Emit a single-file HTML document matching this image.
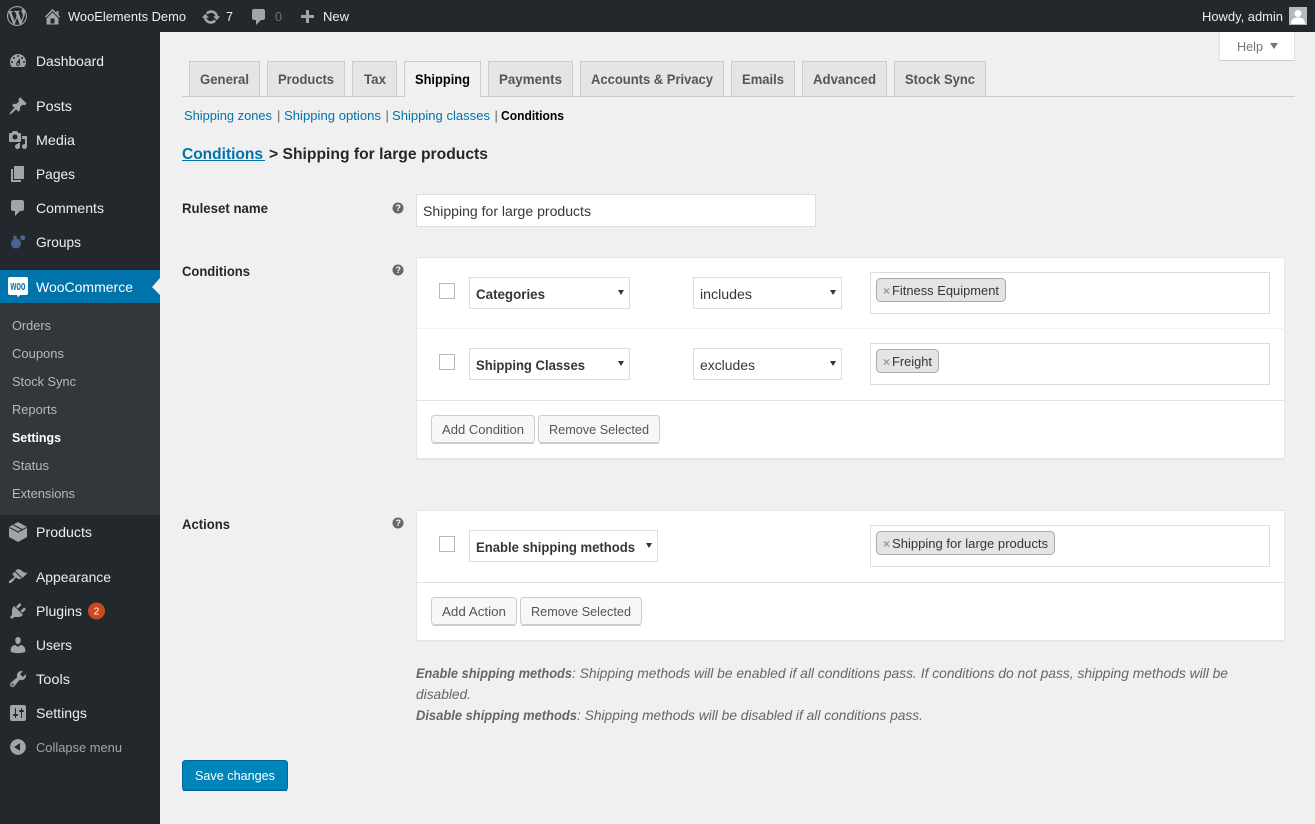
<!DOCTYPE html>
<html><head><meta charset="utf-8"><title>Shipping for large products</title>
<style>
html,body{margin:0;padding:0;width:1315px;height:824px;overflow:hidden;background:#f0f0f0}
svg{display:block}
text{font-family:"Liberation Sans",sans-serif;font-size:14px;white-space:pre}
.m{fill:#eee}
.s{font-size:13px;fill:#b4b9be}
.i{fill:#a0a5aa}
.tab{font-weight:bold;fill:#555}
.l{font-size:13px;fill:#0073aa}
.lab{font-weight:bold;fill:#23282d}
.sel{fill:#32373c}
.b{font-weight:bold}
.tg{font-size:13px;fill:#32373c}
.bt{font-size:13px;fill:#555}
.d{font-style:italic;fill:#666}
</style></head><body>
<svg width="1315" height="824" viewBox="0 0 1315 824" xmlns="http://www.w3.org/2000/svg">
<defs>
<path id="cm" d="M5 2h9c1.1 0 2 .9 2 2v7c0 1.1-.9 2-2 2h-2l-5 5v-5H5c-1.1 0-2-.9-2-2V4c0-1.1.9-2 2-2z"/>
</defs>
<rect width="1315" height="824" fill="#f0f0f0"/>
<rect x="763" y="762" width="254" height="62" fill="#f1f1f1"/>

<!-- sidebar -->
<rect x="0" y="0" width="160" height="824" fill="#23282d"/>
<rect x="0" y="303" width="160" height="212" fill="#32373c"/>
<rect x="0" y="270" width="160" height="33" fill="#0073aa"/>
<polygon points="160,278 152,287 160,295" fill="#f0f0f0"/>
<!-- admin bar -->
<rect x="0" y="0" width="1315" height="32" fill="#23282d"/>

<g class="i">
<path transform="translate(7,6)" d="M20 10c0-5.51-4.49-10-10-10C4.48 0 0 4.49 0 10c0 5.52 4.48 10 10 10 5.51 0 10-4.48 10-10zM7.78 15.37L4.37 6.22c.55-.02 1.17-.08 1.17-.08.5-.06.44-1.13-.06-1.11 0 0-1.45.11-2.37.11-.18 0-.37 0-.58-.01C4.12 2.69 6.87 1.11 10 1.11c2.33 0 4.45.87 6.05 2.34-.68-.11-1.65.39-1.65 1.58 0 .74.45 1.36.9 2.1.35.61.55 1.36.55 2.46 0 1.49-1.4 5-1.4 5l-3.03-8.37c.54-.02.82-.17.82-.17.5-.05.44-1.25-.06-1.22 0 0-1.44.12-2.38.12-.87 0-2.33-.12-2.33-.12-.5-.03-.56 1.2-.06 1.22l.92.08 1.26 3.41zM17.41 10c.24-.64.74-1.87.43-4.25.7 1.29 1.05 2.71 1.05 4.25 0 3.29-1.73 6.24-4.4 7.78.97-2.59 1.94-5.2 2.92-7.78zM6.1 18.09C3.12 16.65 1.11 13.53 1.11 10c0-1.3.23-2.48.72-3.59C3.25 10.3 4.67 14.2 6.1 18.09zm4.03-6.63l2.58 6.98c-.86.29-1.76.45-2.71.45-.79 0-1.57-.11-2.29-.33.81-2.38 1.62-4.74 2.42-7.1z"/>
<path transform="translate(42.5,6.5)" d="M16 8.5l1.53 1.53-1.06 1.06L10 4.62l-6.47 6.47-1.06-1.06L10 2.5l4 4v-2h2v4zm-6-2.46l6 5.99V18H4v-5.97zM12 17v-5H8v5h4z"/>
<path transform="translate(201,7)" d="M10.2 3.28c3.53 0 6.43 2.61 6.92 6h2.08l-3.5 4-3.5-4h2.32c-.45-1.97-2.21-3.45-4.32-3.45-1.45 0-2.73.71-3.54 1.78L4.95 5.66C6.23 4.2 8.11 3.28 10.2 3.28zm-.4 13.44c-3.52 0-6.43-2.61-6.92-6H.8l3.5-4c1.17 1.33 2.33 2.67 3.5 4H5.48c.45 1.97 2.21 3.45 4.32 3.45 1.45 0 2.73-.71 3.54-1.78l1.71 1.95c-1.28 1.46-3.15 2.38-5.25 2.38z"/>
<use href="#cm" transform="translate(249,7)"/>
<path transform="translate(297,8)" d="M17 7v3h-5v5H9v-5H4V7h5V2h3v5h5z"/>

<path transform="translate(8,51)" d="M3.76 16h12.48c1.1-1.37 1.76-3.11 1.76-5 0-4.42-3.58-8-8-8s-8 3.58-8 8c0 1.89.66 3.63 1.76 5zM10 4c.55 0 1 .45 1 1s-.45 1-1 1-1-.45-1-1 .45-1 1-1zM6 6c.55 0 1 .45 1 1s-.45 1-1 1-1-.45-1-1 .45-1 1-1zm8 0c.55 0 1 .45 1 1s-.45 1-1 1-1-.45-1-1 .45-1 1-1zm-5.37 5.55L12 7v6c0 1.1-.9 2-2 2s-2-.9-2-2c0-.57.24-1.08.63-1.45zM4 10c.55 0 1 .45 1 1s-.45 1-1 1-1-.45-1-1 .45-1 1-1zm12 0c.55 0 1 .45 1 1s-.45 1-1 1-1-.45-1-1 .45-1 1-1zm-5 3c0-.55-.45-1-1-1s-1 .45-1 1 .45 1 1 1 1-.45 1-1z" fill-rule="evenodd"/>
<path transform="translate(8,96)" d="M10.44 3.02l1.82-1.82 6.36 6.35-1.83 1.82c-1.05-.68-2.48-.57-3.41.36l-.75.75c-.92.93-1.04 2.35-.35 3.41l-1.83 1.82-2.41-2.41-2.8 2.79c-.42.42-3.38 2.71-3.8 2.29s1.86-3.39 2.28-3.81l2.79-2.79L4.1 9.36l1.83-1.82c1.05.69 2.48.57 3.4-.36l.75-.75c.93-.92 1.05-2.35.36-3.41z"/>
<path transform="translate(8,130)" d="M13 11V4c0-.55-.45-1-1-1h-1.67L9 1H5L3.67 3H2c-.55 0-1 .45-1 1v7c0 .55.45 1 1 1h10c.55 0 1-.45 1-1zM7 4.5c1.38 0 2.5 1.12 2.5 2.5S8.38 9.5 7 9.5 4.5 8.38 4.5 7 5.62 4.5 7 4.5zM14 6h5v10.5c0 1.38-1.12 2.5-2.5 2.5S14 17.88 14 16.5s1.12-2.5 2.5-2.5c.17 0 .34.02.5.05V9h-3V6zm-4 8.05V13h2v3.5c0 1.38-1.12 2.5-2.5 2.5S7 17.88 7 16.5 8.12 14 9.5 14c.17 0 .34.02.5.05z"/>
<path transform="translate(8,164)" d="M6 15V2h10v13H6zm-1 1h8v2H3V5h2v11z"/>
<use href="#cm" transform="translate(8,198)"/>
<polygon points="18,522 27,527 27,537 18,542 9,537 9,527"/>
<path transform="translate(8,567)" d="M14.48 11.06L7.41 3.99l1.5-1.5c.5-.56 2.3-.47 3.51.32 1.21.8 1.43 1.28 2.91 2.1 1.18.64 2.45 1.26 4.45.85zm-.71.71L6.7 4.7 4.93 6.47c-.39.39-.39 1.02 0 1.41l1.06 1.06c.39.39.39 1.03 0 1.42-.6.6-1.43 1.11-2.21 1.69-.35.26-.7.53-1.01.84C1.43 13.23.27 15.14 1 15.87c.74.73 2.65-.43 3.99-1.77.31-.31.58-.66.84-1.01.58-.78 1.09-1.61 1.69-2.21.39-.39 1.03-.39 1.42 0l1.06 1.06c.39.39 1.02.39 1.41 0z"/>
<path transform="translate(8,601)" d="M13.11 4.36L9.87 7.6 8 5.73l3.24-3.24c.35-.34 1.05-.2 1.56.32.52.51.66 1.21.31 1.55zm-8 1.77l.91-1.12 9.01 9.01-1.19.84c-.71.71-2.63 1.16-3.82 1.16H6.14L4.9 17.26c-.59.59-1.54.59-2.12 0-.59-.58-.59-1.53 0-2.12l1.24-1.24v-3.88c0-1.13.4-3.19 1.09-3.89zm7.26 3.97l3.24-3.24c.34-.35 1.04-.21 1.55.31.52.51.66 1.21.31 1.55l-3.24 3.25z"/>
<path transform="translate(8,635)" d="M10 9.25c-2.27 0-2.73-3.44-2.73-3.44C7 4.02 7.82 2 9.97 2c2.16 0 2.98 2.02 2.71 3.81 0 0-.41 3.44-2.68 3.44zm0 2.57L12.72 10c2.39 0 4.52 2.33 4.52 4.53v2.49s-3.65 1.13-7.24 1.13c-3.65 0-7.24-1.13-7.24-1.13v-2.49c0-2.25 1.94-4.48 4.47-4.48z"/>
<path transform="translate(8,669)" d="M16.68 9.77c-1.34 1.34-3.3 1.67-4.95.99l-5.41 6.52c-.99.99-2.59.99-3.58 0s-.99-2.59 0-3.57l6.52-5.42c-.68-1.65-.35-3.61.99-4.95 1.28-1.28 3.12-1.62 4.72-1.06l-2.89 2.89 2.82 2.82 2.86-2.87c.53 1.58.18 3.39-1.08 4.65zM3.81 16.21c.4.39 1.04.39 1.43 0 .4-.4.4-1.04 0-1.43-.39-.4-1.03-.4-1.43 0-.39.39-.39 1.03 0 1.43z"/>
<path transform="translate(8,703)" d="M18 16V4c0-1.1-.9-2-2-2H4c-1.1 0-2 .9-2 2v12c0 1.1.9 2 2 2h12c1.1 0 2-.9 2-2zM8 11h1c.55 0 1 .45 1 1s-.45 1-1 1H8v1.5c0 .28-.22.5-.5.5s-.5-.22-.5-.5V13H6c-.55 0-1-.45-1-1s.45-1 1-1h1V5.5c0-.28.22-.5.5-.5s.5.22.5.5V11zm5-2h-1c-.55 0-1-.45-1-1s.45-1 1-1h1V5.5c0-.28.22-.5.5-.5s.5.22.5.5V7h1c.55 0 1 .45 1 1s-.45 1-1 1h-1v5.5c0 .28-.22.5-.5.5s-.5-.22-.5-.5V9z" fill-rule="evenodd"/>
<path transform="translate(8,737)" d="M10 2.16c4.33 0 7.84 3.51 7.84 7.84s-3.51 7.84-7.84 7.84S2.16 14.33 2.16 10 5.71 2.16 10 2.16zm2 11.72V6.12L6.18 9.97z"/>
</g>
<!-- products box detail -->
<path d="M9.500 527.500L18 532L26.500 527.500M13.500 525L22 529.500" fill="none" stroke="#23282d" stroke-width="1"/>
<!-- groups -->
<g fill="#4a6494"><circle cx="16" cy="243.500" r="5"/><circle cx="22.700" cy="237.700" r="2.500"/><circle cx="15" cy="237.300" r="1.700"/></g>
<!-- woo -->
<path d="M10 277h16a2 2 0 0 1 2 2v14a2 2 0 0 1-2 2h-6l-2 2.500-1-2.500h-7a2 2 0 0 1-2-2v-14a2 2 0 0 1 2-2z" fill="#fff"/>
<text x="10.500" y="290" font-weight="bold" style="font-size:13px" fill="#0073aa" textLength="15" lengthAdjust="spacingAndGlyphs">woo</text>

<!-- admin bar text -->
<text class="m" style="font-size:13px" x="68" y="21" textLength="118" lengthAdjust="spacingAndGlyphs">WooElements Demo</text>
<text class="m" style="font-size:13px" x="226" y="21" textLength="7" lengthAdjust="spacingAndGlyphs">7</text>
<text style="font-size:13px" fill="#6f7478" x="275" y="21" textLength="7" lengthAdjust="spacingAndGlyphs">0</text>
<text class="m" style="font-size:13px" x="323" y="21" textLength="26" lengthAdjust="spacingAndGlyphs">New</text>
<text class="m" style="font-size:13px" x="1202" y="21" textLength="81" lengthAdjust="spacingAndGlyphs">Howdy, admin</text>
<rect x="1289" y="7" width="18" height="18" fill="#b9b9b9"/>
<circle cx="1298" cy="13.500" r="3.500" fill="#fff"/><path d="M1291 24c0-5 3-6.500 7-6.500s7 1.500 7 6.500z" fill="#fff"/>

<!-- side menu text -->
<text class="m" x="36" y="66" textLength="68" lengthAdjust="spacingAndGlyphs">Dashboard</text>
<text class="m" x="36" y="111" textLength="36" lengthAdjust="spacingAndGlyphs">Posts</text>
<text class="m" x="36" y="145" textLength="39" lengthAdjust="spacingAndGlyphs">Media</text>
<text class="m" x="36" y="179" textLength="39" lengthAdjust="spacingAndGlyphs">Pages</text>
<text class="m" x="36" y="213" textLength="68" lengthAdjust="spacingAndGlyphs">Comments</text>
<text class="m" x="36" y="247" textLength="45" lengthAdjust="spacingAndGlyphs">Groups</text>
<text fill="#fff" x="36" y="292" textLength="97" lengthAdjust="spacingAndGlyphs">WooCommerce</text>
<text class="s" x="12" y="330" textLength="39" lengthAdjust="spacingAndGlyphs">Orders</text>
<text class="s" x="12" y="358" textLength="52" lengthAdjust="spacingAndGlyphs">Coupons</text>
<text class="s" x="12" y="386" textLength="64" lengthAdjust="spacingAndGlyphs">Stock Sync</text>
<text class="s" x="12" y="414" textLength="45" lengthAdjust="spacingAndGlyphs">Reports</text>
<text class="s" style="fill:#fff;font-weight:bold" x="12" y="442" textLength="49" lengthAdjust="spacingAndGlyphs">Settings</text>
<text class="s" x="12" y="470" textLength="37" lengthAdjust="spacingAndGlyphs">Status</text>
<text class="s" x="12" y="498" textLength="63" lengthAdjust="spacingAndGlyphs">Extensions</text>
<text class="m" x="36" y="537" textLength="56" lengthAdjust="spacingAndGlyphs">Products</text>
<text class="m" x="36" y="582" textLength="75" lengthAdjust="spacingAndGlyphs">Appearance</text>
<text class="m" x="36" y="616" textLength="46" lengthAdjust="spacingAndGlyphs">Plugins</text>
<circle cx="96.500" cy="611" r="8.500" fill="#ca4a1f"/>
<text fill="#fff" style="font-size:10px" x="93.800" y="614.500" textLength="5.500" lengthAdjust="spacingAndGlyphs">2</text>
<text class="m" x="36" y="650" textLength="36" lengthAdjust="spacingAndGlyphs">Users</text>
<text class="m" x="36" y="684" textLength="34" lengthAdjust="spacingAndGlyphs">Tools</text>
<text class="m" x="36" y="718" textLength="51" lengthAdjust="spacingAndGlyphs">Settings</text>
<text style="font-size:13px" fill="#a0a5aa" x="36" y="752" textLength="86" lengthAdjust="spacingAndGlyphs">Collapse menu</text>

<!-- help tab -->
<rect x="1220" y="32" width="74" height="28" fill="#fff"/>
<rect x="1219" y="32" width="1" height="28" fill="#e3e3e3"/><rect x="1294" y="32" width="1" height="28" fill="#e3e3e3"/>
<rect x="1219" y="60" width="76" height="1" fill="#cfcfcf"/>
<text style="font-size:13px" fill="#72777c" x="1237" y="51" textLength="26" lengthAdjust="spacingAndGlyphs">Help</text>
<polygon points="1270,43 1278,43 1274,49" fill="#72777c"/>

<!-- tabs -->
<rect x="182" y="96" width="1113" height="1" fill="#ccc"/>
<g fill="#e5e5e5" stroke="#ccc">
<rect x="189.500" y="61.500" width="70" height="35"/>
<rect x="267.500" y="61.500" width="77" height="35"/>
<rect x="352.500" y="61.500" width="44" height="35"/>
<rect x="488.500" y="61.500" width="84" height="35"/>
<rect x="580.500" y="61.500" width="143" height="35"/>
<rect x="731.500" y="61.500" width="63" height="35"/>
<rect x="802.500" y="61.500" width="84" height="35"/>
<rect x="894.500" y="61.500" width="91" height="35"/>
</g>
<path d="M404.500 97V61.500H480.500V97" fill="#f1f1f1" stroke="#ccc"/>
<rect x="405" y="96" width="75" height="1" fill="#f1f1f1"/>
<text class="tab" x="200" y="84" textLength="49" lengthAdjust="spacingAndGlyphs">General</text>
<text class="tab" x="278" y="84" textLength="56" lengthAdjust="spacingAndGlyphs">Products</text>
<text class="tab" x="364" y="84" textLength="22" lengthAdjust="spacingAndGlyphs">Tax</text>
<text class="tab" style="fill:#000" x="415" y="84" textLength="55" lengthAdjust="spacingAndGlyphs">Shipping</text>
<text class="tab" x="499" y="84" textLength="63" lengthAdjust="spacingAndGlyphs">Payments</text>
<text class="tab" x="591" y="84" textLength="122" lengthAdjust="spacingAndGlyphs">Accounts &amp; Privacy</text>
<text class="tab" x="742" y="84" textLength="42" lengthAdjust="spacingAndGlyphs">Emails</text>
<text class="tab" x="813" y="84" textLength="63" lengthAdjust="spacingAndGlyphs">Advanced</text>
<text class="tab" x="905" y="84" textLength="70" lengthAdjust="spacingAndGlyphs">Stock Sync</text>

<!-- sublinks -->
<text class="l" x="184" y="120" textLength="88" lengthAdjust="spacingAndGlyphs">Shipping zones</text>
<text style="font-size:13px" fill="#666" x="277" y="120">|</text>
<text class="l" x="284" y="120" textLength="97" lengthAdjust="spacingAndGlyphs">Shipping options</text>
<text style="font-size:13px" fill="#666" x="385.500" y="120">|</text>
<text class="l" x="392" y="120" textLength="98" lengthAdjust="spacingAndGlyphs">Shipping classes</text>
<text style="font-size:13px" fill="#666" x="494.500" y="120">|</text>
<text style="font-size:13px;font-weight:bold" fill="#000" x="501" y="120" textLength="63" lengthAdjust="spacingAndGlyphs">Conditions</text>

<!-- heading -->
<text style="font-size:16px;font-weight:bold" fill="#0073aa" x="182" y="159" textLength="81" lengthAdjust="spacingAndGlyphs">Conditions</text>
<rect x="182" y="160" width="83" height="1" fill="#0073aa"/>
<text style="font-size:16px;font-weight:bold" fill="#23282d" x="269" y="159" textLength="219" lengthAdjust="spacingAndGlyphs">&gt; Shipping for large products</text>

<!-- labels -->
<text class="lab" x="182" y="213" textLength="86" lengthAdjust="spacingAndGlyphs">Ruleset name</text>
<text class="lab" x="182" y="276" textLength="68" lengthAdjust="spacingAndGlyphs">Conditions</text>
<text class="lab" x="182" y="529" textLength="48" lengthAdjust="spacingAndGlyphs">Actions</text>
<circle cx="398" cy="208" r="5.500" fill="#666"/><circle cx="398" cy="270" r="5.500" fill="#666"/><circle cx="398" cy="523" r="5.500" fill="#666"/>
<text fill="#fff" style="font-size:9px;font-weight:bold" x="395.500" y="211.200">?</text>
<text fill="#fff" style="font-size:9px;font-weight:bold" x="395.500" y="273.200">?</text>
<text fill="#fff" style="font-size:9px;font-weight:bold" x="395.500" y="526.200">?</text>

<!-- ruleset input -->
<rect x="416.500" y="194.500" width="399" height="32" fill="#fff" stroke="#ddd"/>
<text class="sel" x="423" y="216" textLength="168" lengthAdjust="spacingAndGlyphs">Shipping for large products</text>

<!-- conditions box -->
<rect x="416.500" y="257.500" width="868" height="201" fill="#fff" stroke="#e5e5e5"/>
<rect x="416" y="459" width="869" height="1" fill="#e6e6e6"/>
<rect x="417" y="328" width="867" height="1" fill="#f3f3f3"/>
<rect x="417" y="400" width="867" height="1" fill="#e1e1e1"/>
<!-- actions box -->
<rect x="416.500" y="510.500" width="868" height="130" fill="#fff" stroke="#e5e5e5"/>
<rect x="416" y="641" width="869" height="1" fill="#e6e6e6"/>
<rect x="417" y="582" width="867" height="1" fill="#e1e1e1"/>

<g fill="#fff" stroke="#b4b9be">
<rect x="439.500" y="283.500" width="15" height="15"/>
<rect x="439.500" y="354.500" width="15" height="15"/>
<rect x="439.500" y="536.500" width="15" height="15"/>
</g>
<g fill="#fff" stroke="#ddd">
<rect x="469.500" y="277.500" width="160" height="31"/>
<rect x="693.500" y="277.500" width="148" height="31"/>
<rect x="870.500" y="272.500" width="399" height="41"/>
<rect x="469.500" y="348.500" width="160" height="31"/>
<rect x="693.500" y="348.500" width="148" height="31"/>
<rect x="870.500" y="343.500" width="399" height="41"/>
<rect x="469.500" y="530.500" width="188" height="31"/>
<rect x="870.500" y="525.500" width="399" height="41"/>
</g>
<g fill="#32373c">
<polygon points="618,290 624,290 621,295"/>
<polygon points="830,290 836,290 833,295"/>
<polygon points="618,361 624,361 621,366"/>
<polygon points="830,361 836,361 833,366"/>
<polygon points="646,543 652,543 649,548"/>
</g>
<text class="sel b" x="476" y="299" textLength="69" lengthAdjust="spacingAndGlyphs">Categories</text>
<text class="sel" x="700" y="299" textLength="52" lengthAdjust="spacingAndGlyphs">includes</text>
<text class="sel b" x="476" y="370" textLength="109" lengthAdjust="spacingAndGlyphs">Shipping Classes</text>
<text class="sel" x="700" y="370" textLength="55" lengthAdjust="spacingAndGlyphs">excludes</text>
<text class="sel b" x="476" y="552" textLength="159" lengthAdjust="spacingAndGlyphs">Enable shipping methods</text>
<g fill="#e4e4e4" stroke="#aaa">
<rect x="876.500" y="278.500" width="129" height="23" rx="4"/>
<rect x="876.500" y="349.500" width="62" height="23" rx="4"/>
<rect x="876.500" y="531.500" width="178" height="23" rx="4"/>
</g>
<text style="font-size:12px;font-weight:bold" fill="#999" x="883" y="295">×</text>
<text style="font-size:12px;font-weight:bold" fill="#999" x="883" y="366">×</text>
<text style="font-size:12px;font-weight:bold" fill="#999" x="883" y="548">×</text>
<text class="tg" x="892" y="295" textLength="107" lengthAdjust="spacingAndGlyphs">Fitness Equipment</text>
<text class="tg" x="892" y="366" textLength="40" lengthAdjust="spacingAndGlyphs">Freight</text>
<text class="tg" x="892" y="548" textLength="156" lengthAdjust="spacingAndGlyphs">Shipping for large products</text>
<g fill="#ccc">
<rect x="432" y="443" width="102" height="1"/><rect x="539" y="443" width="120" height="1"/>
<rect x="432" y="625" width="84" height="1"/><rect x="521" y="625" width="120" height="1"/>
</g>
<g fill="#f7f7f7" stroke="#ccc">
<rect x="431.500" y="415.500" width="103" height="27" rx="3"/>
<rect x="538.500" y="415.500" width="121" height="27" rx="3"/>
<rect x="431.500" y="597.500" width="85" height="27" rx="3"/>
<rect x="520.500" y="597.500" width="121" height="27" rx="3"/>
</g>
<text class="bt" x="442" y="434" textLength="82" lengthAdjust="spacingAndGlyphs">Add Condition</text>
<text class="bt" x="549" y="434" textLength="100" lengthAdjust="spacingAndGlyphs">Remove Selected</text>
<text class="bt" x="442" y="616" textLength="64" lengthAdjust="spacingAndGlyphs">Add Action</text>
<text class="bt" x="531" y="616" textLength="100" lengthAdjust="spacingAndGlyphs">Remove Selected</text>

<!-- description -->
<text class="d b" x="416" y="678" textLength="156" lengthAdjust="spacingAndGlyphs">Enable shipping methods</text>
<text class="d" x="572" y="678" textLength="656" lengthAdjust="spacingAndGlyphs">: Shipping methods will be enabled if all conditions pass. If conditions do not pass, shipping methods will be</text>
<text class="d" x="416" y="699" textLength="55" lengthAdjust="spacingAndGlyphs">disabled.</text>
<text class="d b" x="416" y="720" textLength="161" lengthAdjust="spacingAndGlyphs">Disable shipping methods</text>
<text class="d" x="577" y="720" textLength="346" lengthAdjust="spacingAndGlyphs">: Shipping methods will be disabled if all conditions pass.</text>

<!-- save -->
<rect x="182.500" y="760.500" width="105" height="30" rx="3" fill="#0085ba" stroke="#006799"/>
<rect x="183" y="789.500" width="104" height="1.500" fill="#006799"/>
<text style="font-size:13px" fill="#fff" x="195" y="780" textLength="80" lengthAdjust="spacingAndGlyphs">Save changes</text>
</svg>
</body></html>
